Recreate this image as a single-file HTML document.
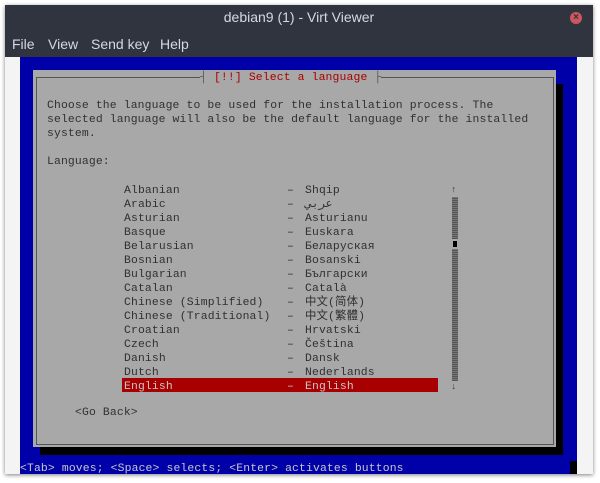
<!DOCTYPE html>
<html><head><style>
body{margin:0;width:600px;height:483px;background:#fff;position:relative;overflow:hidden;font-family:"Liberation Sans",sans-serif}
.a{position:absolute}
.m{font-family:"Liberation Mono","Noto Sans CJK SC",monospace;font-size:11.4px;letter-spacing:0.14px;white-space:pre;line-height:14px;color:#303030}
</style></head><body>
<div class="a" style="left:5px;top:5px;width:588px;height:469px;background:#f4f4f4;box-shadow:0 1px 4px rgba(0,0,0,.5)"></div>
<div class="a" style="left:5px;top:5px;width:588px;height:52px;background:#2f343f"></div>
<div class="a" style="left:5px;top:9px;width:588px;text-align:center;color:#d3dae3;font-size:14px">debian9 (1) - Virt Viewer</div>
<div class="a" style="left:570px;top:12px;width:12px;height:12px;border-radius:50%;background:#cc575d;color:#2f343f;font-size:10px;line-height:12px;text-align:center;font-weight:bold">×</div>
<div class="a" style="left:12px;top:36px;color:#d3dae3;font-size:14px">File</div>
<div class="a" style="left:48px;top:36px;color:#d3dae3;font-size:14px">View</div>
<div class="a" style="left:91px;top:36px;color:#d3dae3;font-size:14px">Send key</div>
<div class="a" style="left:160px;top:36px;color:#d3dae3;font-size:14px">Help</div>
<div class="a" style="left:20px;top:57px;width:557px;height:417px;background:#0000a8"></div>
<div class="a" style="left:40px;top:84px;width:523px;height:371px;background:#000"></div>
<div class="a" style="left:33px;top:70px;width:523px;height:377px;background:#a8a8a8"></div>
<div class="a" style="left:36px;top:77px;width:516px;height:366px;border:1px solid #555"></div>
<div class="a m" style="left:200px;top:71px;background:#a8a8a8;color:#555">┤ <span style="color:#a80000">[!!] Select a language</span> ├</div>
<div class="a m" style="left:47px;top:99px">Choose the language to be used for the installation process. The
selected language will also be the default language for the installed
system.

Language:</div>
<div class="a" style="left:122px;top:378px;width:316px;height:14px;background:#a80000"></div>
<div class="a m" style="left:124px;top:184px">Albanian
Arabic
Asturian
Basque
Belarusian
Bosnian
Bulgarian
Catalan
Chinese (Simplified)
Chinese (Traditional)
Croatian
Czech
Danish
Dutch
<span style="color:#c8c8c8">English</span></div>
<div class="a m" style="left:287px;top:184px">–
–
–
–
–
–
–
–
–
–
–
–
–
–
<span style="color:#c8c8c8">–</span></div>
<div class="a m" style="left:305px;top:184px">Shqip
عربي
Asturianu
Euskara
Беларуская
Bosanski
Български
Català
中文(简体)
中文(繁體)
Hrvatski
Čeština
Dansk
Nederlands
<span style="color:#c8c8c8">English</span></div>
<div class="a m" style="left:451px;top:183px;font-size:9px">↑</div>
<div class="a" style="left:452px;top:197px;width:6px;height:184px;background:repeating-linear-gradient(0deg,#555 0 1px,#777 1px 2px)"></div>
<div class="a" style="left:452px;top:239px;width:6px;height:10px;background:#a8a8a8"></div>
<div class="a" style="left:453px;top:241px;width:4px;height:6px;background:#000"></div>
<div class="a m" style="left:451px;top:380px;font-size:9px">↓</div>
<div class="a m" style="left:75px;top:406px">&lt;Go Back&gt;</div>
<div class="a m" style="left:20px;top:462px;color:#c8c8c8">&lt;Tab&gt; moves; &lt;Space&gt; selects; &lt;Enter&gt; activates buttons</div>
<div class="a" style="left:570px;top:461px;width:7px;height:13px;background:#000"></div>
</body></html>
